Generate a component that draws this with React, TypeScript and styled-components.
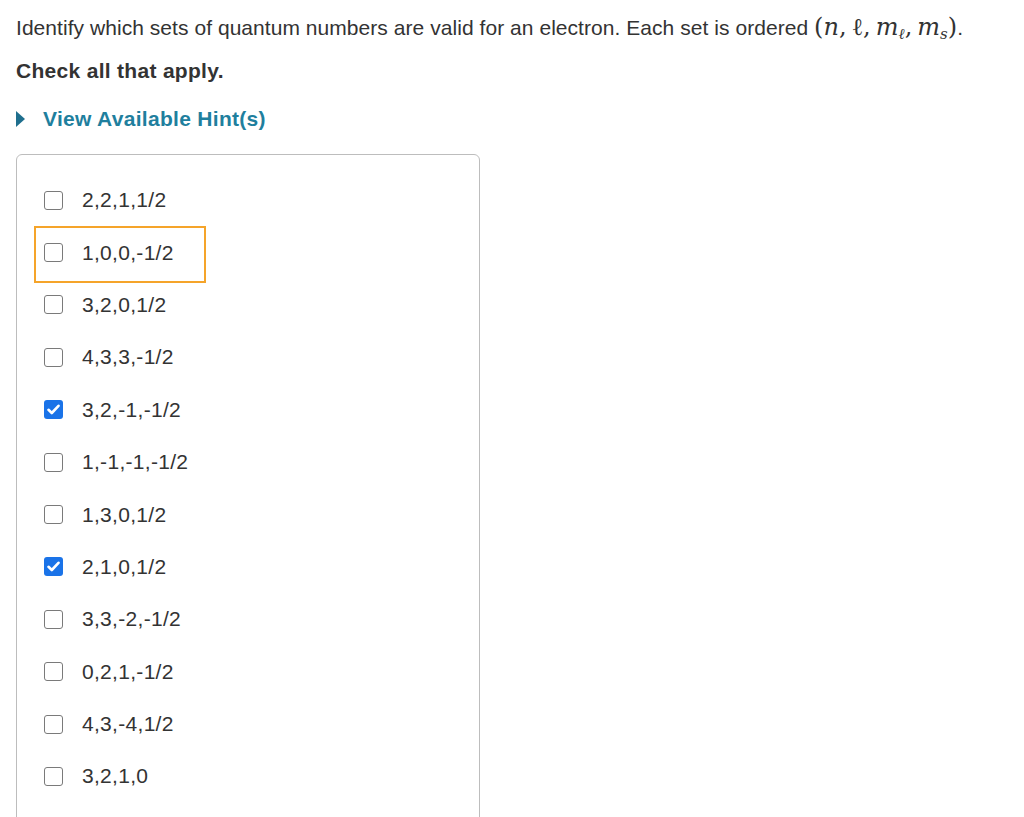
import React from 'react'
import styled, { createGlobalStyle } from 'styled-components'

const Global = createGlobalStyle`
  body {
    margin: 0;
    background: #fff;
    font-family: "Liberation Sans", Arial, sans-serif;
    color: #333;
  }
`

const Page = styled.div`
  padding: 12px 16px 0 16px;
`

const Prompt = styled.p`
  margin: 0;
  font-size: 21px;
  line-height: 30px;
  letter-spacing: 0.05px;
`

const Math = styled.span`
  font-family: "DejaVu Serif", "Liberation Serif", serif;
  font-size: 24px;
  letter-spacing: 0;
`

const Var = styled.i`
  font-style: italic;
`

const Comma = styled.span`
  margin-right: 5px;
`

const Sub = styled.sub`
  font-size: 15px;
  vertical-align: -4px;
  font-style: italic;
`

const Instruction = styled.p`
  margin: 10px 0 0 0;
  font-size: 21px;
  font-weight: bold;
  line-height: 24px;
  letter-spacing: 0.3px;
`

const Hint = styled.button`
  display: flex;
  align-items: center;
  gap: 18px;
  margin-top: 24px;
  padding: 0;
  border: none;
  background: transparent;
  font-family: inherit;
  font-size: 21px;
  font-weight: bold;
  letter-spacing: 0.3px;
  color: #1f7f9e;
  cursor: pointer;
`

const Arrow = styled.span`
  width: 0;
  height: 0;
  border-top: 8px solid transparent;
  border-bottom: 8px solid transparent;
  border-left: 9px solid #1f6f8e;
`

const Box = styled.div`
  margin-top: 23px;
  width: 464px;
  height: 700px;
  box-sizing: border-box;
  border: 1px solid #bdbdbd;
  border-radius: 6px;
  padding: 19px 0 0 17px;
`

const Option = styled.label<{ $focused?: boolean }>`
  position: relative;
  display: flex;
  align-items: center;
  gap: 19px;
  width: 172px;
  height: 52.4px;
  box-sizing: border-box;
  padding-left: 10px;
  font-size: 21px;
  letter-spacing: 0.3px;
  cursor: pointer;
  &::after {
    content: '';
    display: ${p => (p.$focused ? 'block' : 'none')};
    position: absolute;
    inset: 0 0 -4px 0;
    border: 2.5px solid #f5a42a;
    pointer-events: none;
  }
`

const Check = styled.span<{ $checked?: boolean }>`
  width: 19px;
  height: 19px;
  box-sizing: border-box;
  border-radius: 3px;
  border: ${p => (p.$checked ? 'none' : '1.5px solid #7a7a7a')};
  background: ${p => (p.$checked ? '#1a73e8' : '#fff')};
  display: flex;
  align-items: center;
  justify-content: center;
  flex-shrink: 0;
`

const options = [
  { text: '2,2,1,1/2' },
  { text: '1,0,0,-1/2', focused: true },
  { text: '3,2,0,1/2' },
  { text: '4,3,3,-1/2' },
  { text: '3,2,-1,-1/2', checked: true },
  { text: '1,-1,-1,-1/2' },
  { text: '1,3,0,1/2' },
  { text: '2,1,0,1/2', checked: true },
  { text: '3,3,-2,-1/2' },
  { text: '0,2,1,-1/2' },
  { text: '4,3,-4,1/2' },
  { text: '3,2,1,0' },
]

const App = () => {
  return (
    <>
      <Global />
      <Page>
        <Prompt>
          Identify which sets of quantum numbers are valid for an electron. Each set is ordered{' '}
          <Math>
            (<Var>n</Var><Comma>,</Comma>ℓ<Comma>,</Comma><Var>m</Var><Sub>ℓ</Sub><Comma>,</Comma><Var>m</Var><Sub>s</Sub>)
          </Math>
          .
        </Prompt>
        <Instruction>Check all that apply.</Instruction>
        <Hint>
          <Arrow />
          View Available Hint(s)
        </Hint>
        <Box>
          {options.map(o => (
            <Option key={o.text} $focused={o.focused}>
              <Check $checked={o.checked}>
                {o.checked && (
                  <svg width="13" height="11" viewBox="0 0 13 11">
                    <path d="M1.5 5.8 L4.8 9 L11.5 1.8" fill="none" stroke="#fff" strokeWidth="2.6" strokeLinecap="round" strokeLinejoin="round" />
                  </svg>
                )}
              </Check>
              {o.text}
            </Option>
          ))}
        </Box>
      </Page>
    </>
  )
}

export default App
